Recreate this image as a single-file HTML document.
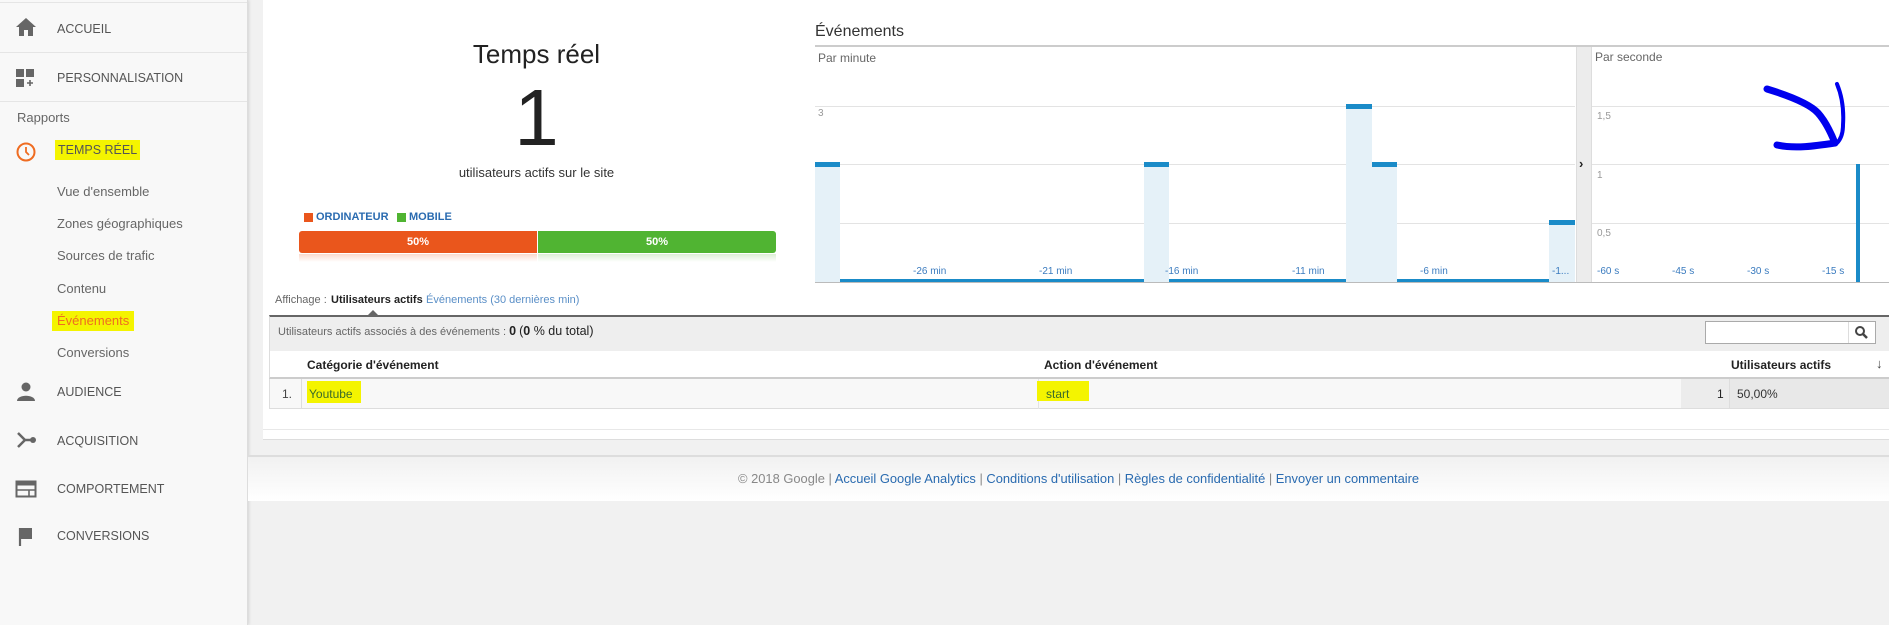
<!DOCTYPE html>
<html><head><meta charset="utf-8">
<style>
*{margin:0;padding:0;box-sizing:border-box}
body{width:1889px;height:625px;overflow:hidden;background:#f1f1f1;font-family:"Liberation Sans",sans-serif;position:relative;color:#333}
.a{position:absolute;white-space:nowrap}
#side{position:absolute;left:0;top:0;width:248px;height:625px;background:#f8f8f8;border-right:1px solid #ddd;box-shadow:1px 0 3px rgba(0,0,0,.12)}
.nav{position:absolute;left:57px;font-size:12.5px;color:#555;line-height:16px}
.sub{position:absolute;left:57px;font-size:13px;color:#666;line-height:16px}
.ic{position:absolute;left:15px}
.hl{background:#f4f400}
#card{position:absolute;left:263px;top:0;width:1626px;height:440px;background:#fff;border-bottom:1px solid #ddd}
.grid{position:absolute;height:1px;background:#e3e3e3}
.bar{position:absolute;background:#e5f1f8;border-top:5px solid #1a8bc8;bottom:343px}
.xl{position:absolute;top:266px;font-size:10px;color:#3a7bbf}
.yl{position:absolute;font-size:10px;color:#999}
</style></head><body>
<div id="side">
  <div class="a" style="left:0;top:2px;width:247px;height:1px;background:#e5e5e5"></div>
  <svg class="ic" style="top:17px" width="22" height="20" viewBox="0 0 22 20"><path d="M11 1 L1 10 H4 V19 H9 V13 H13 V19 H18 V10 H21 Z" fill="#666"/></svg>
  <div class="nav" style="top:21px">ACCUEIL</div>
  <div class="a" style="left:0;top:52px;width:247px;height:1px;background:#e5e5e5"></div>
  <svg class="ic" style="top:68px" width="22" height="20" viewBox="0 0 22 20"><rect x="1" y="1" width="8" height="8" fill="#666"/><rect x="11" y="1" width="8" height="8" fill="#666"/><rect x="1" y="11" width="8" height="8" fill="#666"/><path d="M15 12v6M12 15h6" stroke="#666" stroke-width="1.6"/></svg>
  <div class="nav" style="top:70px">PERSONNALISATION</div>
  <div class="a" style="left:0;top:101px;width:247px;height:1px;background:#e5e5e5"></div>
  <div class="a" style="left:17px;top:110px;font-size:13px;color:#666">Rapports</div>
  <svg class="ic" style="top:141px" width="22" height="22" viewBox="0 0 22 22"><circle cx="11" cy="11" r="8.5" fill="none" stroke="#ef6c21" stroke-width="2"/><path d="M11 6v5l3 3" fill="none" stroke="#ef6c21" stroke-width="1.8"/></svg>
  <div class="nav hl" style="top:140px;left:55px;padding:2px 3px;color:#555">TEMPS RÉEL</div>
  <div class="sub" style="top:184px">Vue d'ensemble</div>
  <div class="sub" style="top:216px">Zones géographiques</div>
  <div class="sub" style="top:248px">Sources de trafic</div>
  <div class="sub" style="top:281px">Contenu</div>
  <div class="sub hl" style="top:311px;left:52px;padding:2px 5px;color:#ef6c21">Événements</div>
  <div class="sub" style="top:345px">Conversions</div>
  <svg class="ic" style="top:382px" width="22" height="20" viewBox="0 0 22 20"><circle cx="11" cy="5" r="4.5" fill="#666"/><path d="M2 19 C2 12 20 12 20 19Z" fill="#666"/></svg>
  <div class="nav" style="top:384px">AUDIENCE</div>
  <svg class="ic" style="top:430px" width="22" height="20" viewBox="0 0 22 20"><path d="M3 3 L10 10 H18 M10 10 L3 17" stroke="#666" stroke-width="2.5" fill="none"/><circle cx="18" cy="10" r="3" fill="#666"/></svg>
  <div class="nav" style="top:433px">ACQUISITION</div>
  <svg class="ic" style="top:479px" width="22" height="20" viewBox="0 0 22 20"><rect x="1.5" y="2.5" width="19" height="15" fill="none" stroke="#666" stroke-width="2"/><rect x="1.5" y="2.5" width="19" height="4" fill="#666"/><path d="M2 11h18M14 11v6" stroke="#666" stroke-width="1.6"/></svg>
  <div class="nav" style="top:481px">COMPORTEMENT</div>
  <svg class="ic" style="top:526px" width="22" height="20" viewBox="0 0 22 20"><path d="M5 2 V20" stroke="#666" stroke-width="2.2"/><path d="M5 2 H17 V13 H5Z" fill="#666"/></svg>
  <div class="nav" style="top:528px">CONVERSIONS</div>
</div>

<div id="card">
  <div class="a" style="left:0;top:39px;width:547px;text-align:center;font-size:26px;color:#222">Temps réel</div>
  <div class="a" style="left:0;top:76px;width:547px;text-align:center;font-size:80px;line-height:84px;color:#222">1</div>
  <div class="a" style="left:0;top:165px;width:547px;text-align:center;font-size:13px;color:#333">utilisateurs actifs sur le site</div>
  <div class="a" style="left:41px;top:213px;width:9px;height:9px;background:#ea561c"></div>
  <div class="a" style="left:53px;top:211px;font-size:11px;font-weight:bold;color:#2a6bb0">ORDINATEUR</div>
  <div class="a" style="left:134px;top:213px;width:9px;height:9px;background:#50b432"></div>
  <div class="a" style="left:146px;top:211px;font-size:11px;font-weight:bold;color:#2a6bb0">MOBILE</div>
  <div class="a" style="left:36px;top:231px;width:238px;height:22px;background:#ea561c;border-radius:3px 0 0 3px;color:#fff;font-size:11px;font-weight:bold;text-align:center;line-height:22px">50%</div>
  <div class="a" style="left:275px;top:231px;width:238px;height:22px;background:#50b432;border-radius:0 3px 3px 0;color:#fff;font-size:11px;font-weight:bold;text-align:center;line-height:22px">50%</div>
  <div class="a" style="left:36px;top:254px;width:238px;height:8px;background:linear-gradient(#fbd9cc,#fff)"></div>
  <div class="a" style="left:275px;top:254px;width:238px;height:8px;background:linear-gradient(#dcefd5,#fff)"></div>

  <div class="a" style="left:552px;top:23px;font-size:16px;color:#333">Événements</div>
  <div class="a" style="left:552px;top:45px;width:1074px;height:2px;background:#ccc"></div>
</div>

<div class="a" style="left:818px;top:51px;font-size:12px;color:#666">Par minute</div>
<div class="grid" style="left:815px;top:106px;width:760px"></div>
<div class="grid" style="left:815px;top:164px;width:760px"></div>
<div class="grid" style="left:815px;top:223px;width:760px"></div>
<div class="yl" style="left:818px;top:108px">3</div>
<div class="yl" style="left:818px;top:167px">2</div>
<div class="yl" style="left:818px;top:226px">1</div>
<div class="bar" style="left:815px;width:25px;top:162px"></div>
<div class="bar" style="left:1144px;width:25px;top:162px"></div>
<div class="bar" style="left:1346px;width:26px;top:104px"></div>
<div class="bar" style="left:1372px;width:25px;top:162px"></div>
<div class="bar" style="left:1549px;width:26px;top:220px"></div>
<div class="a" style="left:840px;top:279px;width:304px;height:3px;background:#1a8bc8"></div>
<div class="a" style="left:1169px;top:279px;width:177px;height:3px;background:#1a8bc8"></div>
<div class="a" style="left:1397px;top:279px;width:152px;height:3px;background:#1a8bc8"></div>
<div class="xl" style="left:913px">-26 min</div>
<div class="xl" style="left:1039px">-21 min</div>
<div class="xl" style="left:1165px">-16 min</div>
<div class="xl" style="left:1292px">-11 min</div>
<div class="xl" style="left:1420px">-6 min</div>
<div class="xl" style="left:1552px">-1...</div>
<div class="a" style="left:815px;top:282px;width:1074px;height:1px;background:#bbb"></div>
<div class="a" style="left:1576px;top:47px;width:16px;height:235px;background:#ececec;border-left:1px solid #ddd;border-right:1px solid #ddd"></div>
<div class="a" style="left:1579px;top:156px;font-size:13px;font-weight:bold;color:#222">›</div>
<div class="a" style="left:1595px;top:50px;font-size:12px;color:#666">Par seconde</div>
<div class="grid" style="left:1592px;top:106px;width:297px"></div>
<div class="grid" style="left:1592px;top:164px;width:297px"></div>
<div class="grid" style="left:1592px;top:223px;width:297px"></div>
<div class="yl" style="left:1597px;top:111px">1,5</div>
<div class="yl" style="left:1597px;top:170px">1</div>
<div class="yl" style="left:1597px;top:228px">0,5</div>
<div class="xl" style="left:1597px">-60 s</div>
<div class="xl" style="left:1672px">-45 s</div>
<div class="xl" style="left:1747px">-30 s</div>
<div class="xl" style="left:1822px">-15 s</div>
<div class="a" style="left:1856px;top:164px;width:4px;height:118px;background:#1a8bc8"></div>
<svg class="a" style="left:0;top:0" width="1889" height="625"><g fill="none" stroke="#0000ee" stroke-linecap="round" stroke-linejoin="round"><path d="M1767 89 C1790 96 1810 104 1818 113 C1826 122 1831 133 1835 143" stroke-width="7"/><path d="M1777 145 C1795 149 1815 146 1835 143" stroke-width="7"/><path d="M1837 84 C1842 96 1844 110 1843 125 C1843 135 1840 140 1837 143" stroke-width="4"/></g></svg>

<div class="a" style="left:275px;top:294px;font-size:11px;color:#666">Affichage :</div>
<div class="a" style="left:331px;top:294px;font-size:11px;font-weight:bold;color:#222">Utilisateurs actifs</div>
<div class="a" style="left:426px;top:294px;font-size:11px;color:#5a8fc7">Événements (30 dernières min)</div>
<div class="a" style="left:368px;top:310px;width:0;height:0;border:5px solid transparent;border-bottom-color:#666;border-top:0"></div>
<div class="a" style="left:269px;top:315px;width:1620px;height:36px;background:#eee;border-top:2px solid #666;border-left:1px solid #ddd"></div>
<div class="a" style="left:278px;top:324px;font-size:11px;color:#666">Utilisateurs actifs associés à des événements : <b style="color:#222;font-size:12.5px">0</b> <span style="color:#222;font-size:12.5px">(<b>0</b> % du total)</span></div>
<div class="a" style="left:1705px;top:321px;width:171px;height:23px;background:#fff;border:1px solid #aaa"></div>
<div class="a" style="left:1848px;top:322px;width:1px;height:21px;background:#ddd"></div>
<svg class="a" style="left:1854px;top:325px" width="16" height="16" viewBox="0 0 16 16"><circle cx="6" cy="6" r="4" fill="none" stroke="#444" stroke-width="2"/><path d="M9 9 L13 13" stroke="#444" stroke-width="2.5"/></svg>
<div class="a" style="left:269px;top:351px;width:1620px;height:28px;background:#fff;border-bottom:2px solid #ccc;border-left:1px solid #ddd"></div>
<div class="a" style="left:307px;top:358px;font-size:12px;font-weight:bold;color:#222">Catégorie d'événement</div>
<div class="a" style="left:1044px;top:358px;font-size:12px;font-weight:bold;color:#222">Action d'événement</div>
<div class="a" style="left:1731px;top:358px;font-size:12px;font-weight:bold;color:#222">Utilisateurs actifs</div>
<div class="a" style="left:1876px;top:356px;font-size:13px;color:#444">↓</div>
<div class="a" style="left:269px;top:379px;width:1620px;height:30px;background:#f8f8f8;border-bottom:1px solid #ddd;border-left:1px solid #ddd"></div>
<div class="a" style="left:301px;top:379px;width:1px;height:30px;background:#ddd"></div>
<div class="a" style="left:1038px;top:379px;width:1px;height:30px;background:#e3e3e3"></div>
<div class="a" style="left:1681px;top:379px;width:48px;height:29px;background:#ececec"></div>
<div class="a" style="left:1729px;top:379px;width:160px;height:29px;background:#e8e8e8;border-left:1px solid #ddd"></div>
<div class="a" style="left:282px;top:387px;font-size:12px;color:#444">1.</div>
<div class="a hl" style="left:307px;top:381px;width:54px;height:22px"></div>
<div class="a" style="left:309px;top:387px;font-size:12px;color:#3a6a2a">Youtube</div>
<div class="a hl" style="left:1037px;top:381px;width:52px;height:20px"></div>
<div class="a" style="left:1046px;top:387px;font-size:12px;color:#3a6a2a">start</div>
<div class="a" style="left:1717px;top:387px;font-size:12px;color:#222">1</div>
<div class="a" style="left:1737px;top:387px;font-size:12px;color:#333">50,00%</div>
<div class="a" style="left:263px;top:429px;width:1626px;height:1px;background:#e8e8e8"></div>

<div class="a" style="left:248px;top:455px;width:1641px;height:46px;background:linear-gradient(#f1f1f1,#fff);border-top:2px solid #ddd"></div>
<div class="a" style="left:738px;top:471px;font-size:12.9px;color:#888">© 2018 Google | <span style="color:#2a6bb0">Accueil Google Analytics</span> | <span style="color:#2a6bb0">Conditions d'utilisation</span> | <span style="color:#2a6bb0">Règles de confidentialité</span> | <span style="color:#2a6bb0">Envoyer un commentaire</span></div>
</body></html>
